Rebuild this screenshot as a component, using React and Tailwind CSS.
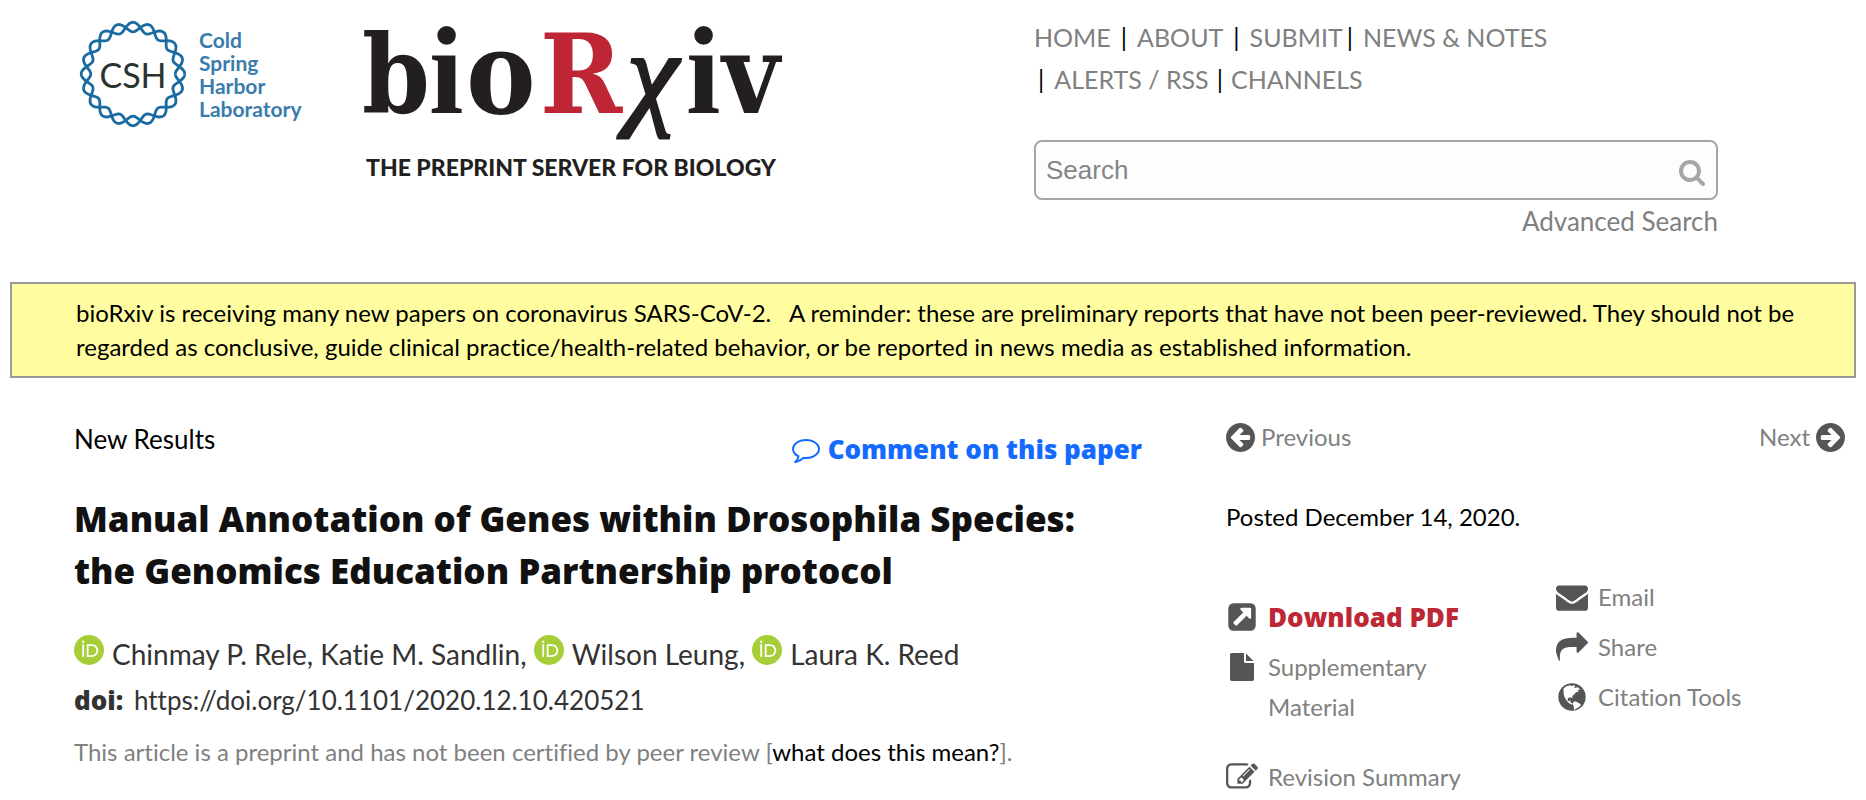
import clsx from 'clsx'

const icons = {
  search: 'M1216 832q0-185-131.5-316.5t-316.5-131.5-316.5 131.5-131.5 316.5 131.5 316.5 316.5 131.5 316.5-131.5 131.5-316.5zm512 832q0 52-38 90t-90 38q-54 0-90-38l-343-342q-179 124-399 124-143 0-273.5-55.5t-225-150-150-225-55.5-273.5 55.5-273.5 150-225 225-150 273.5-55.5 273.5 55.5 225 150 150 225 55.5 273.5q0 220-124 399l343 343q37 37 37 90z',
  arrow: 'M1408 960v-128q0-26-19-45t-45-19h-502l189-189q19-19 19-45t-19-45l-91-91q-18-18-45-18t-45 18l-362 362-91 91q-18 18-18 45t18 45l91 91 362 362q18 18 45 18t45-18l91-91q18-18 18-45t-18-45l-189-189h502q26 0 45-19t19-45zm256-64q0 209-103 385.5t-279.5 279.5-385.5 103-385.5-103-279.5-279.5-103-385.5 103-385.5 279.5-279.5 385.5-103 385.5 103 279.5 279.5 103 385.5z',
  edit: 'M888 1184l116-116-152-152-116 116v56h96v96h56zm440-720q-16-16-33 1l-350 350q-17 17-1 33t33-1l350-350q17-17 1-33zm80 594v190q0 119-84.5 203.5t-203.5 84.5h-832q-119 0-203.5-84.5t-84.5-203.5v-832q0-119 84.5-203.5t203.5-84.5h832q63 0 117 25 15 7 18 23 3 17-9 29l-49 49q-14 14-32 8-23-6-45-6h-832q-66 0-113 47t-47 113v832q0 66 47 113t113 47h832q66 0 113-47t47-113v-126q0-13 9-22l64-64q15-15 35-7t20 29zm-96-738l288 288-672 672h-288v-288zm444 132l-92 92-288-288 92-92q28-28 68-28t68 28l152 152q28 28 28 68t-28 68z',
  share: 'M1792 640q0 26-19 45l-512 512q-19 19-45 19t-45-19-19-45v-256h-224q-98 0-175.5 6t-154 21.5-133 42.5-105.5 69.5-80 101-48.5 138.5-17.5 181q0 55 5 123 0 6 2.5 23.5t2.5 26.5q0 15-8.5 25t-23.5 10q-16 0-28-17-7-9-13-22t-13.5-30-10.5-24q-127-285-127-451 0-199 53-333 162-403 875-403h224v-256q0-26 19-45t45-19 45 19l512 512q19 19 19 45z',
  envelope: 'M1792 710v794q0 66-47 113t-113 47h-1472q-66 0-113-47t-47-113v-794q44 49 101 87 362 246 497 345 57 42 92.5 65.5t94.5 48 110 24.5h2q51 0 110-24.5t94.5-48 92.5-65.5q170-123 498-345 57-39 100-87zm0-294q0 79-49 151t-122 123q-376 261-468 325-10 7-42.5 31t-54 38.5-52 32.5-57.5 27-50 9h-2q-23 0-50-9t-57.5-27-52-32.5-54-38.5-42.5-31q-91-64-262-182.5t-205-142.5q-62-42-117-115.5t-55-136.5q0-78 41.5-130t118.5-52h1472q65 0 112.5 47t47.5 113z',
  file: 'M1152 512v-472q22 14 36 28l408 408q14 14 28 36h-472zm-128 32q0 40 28 68t68 28h544v1056q0 40-28 68t-68 28h-1344q-40 0-68-28t-28-68v-1600q0-40 28-68t68-28h800v544z',
  external: 'M1408 928v-480q0-26-19-45t-45-19h-480q-42 0-59 39-17 41 14 70l144 144-534 534q-19 19-19 45t19 45l102 102q19 19 45 19t45-19l534-534 144 144q18 19 45 19 12 0 25-5 39-17 39-59zm256-512v960q0 119-84.5 203.5t-203.5 84.5h-960q-119 0-203.5-84.5t-84.5-203.5v-960q0-119 84.5-203.5t203.5-84.5h960q119 0 203.5 84.5t84.5 203.5z',
  comment: 'M896 384q-204 0-381.5 69.5t-282 187.5-104.5 255q0 112 71.5 213.5t201.5 175.5l87 50-27 96q-24 91-70 172 152-63 275-171l43-38 57 6q69 8 130 8 204 0 381.5-69.5t282-187.5 104.5-255-104.5-255-282-187.5-381.5-69.5zm896 512q0 174-120 321.5t-326 233-450 85.5q-70 0-145-8-198 175-460 242-49 14-114 22h-5q-15 0-27-10.5t-16-27.5v-1q-3-4-.5-12t2-10 4.5-9.5l6-9 7-8.5 8-9q7-8 31-34.5t34.5-38 31-39.5 32.5-51 27-59 26-76q-157-89-247.5-220t-90.5-281q0-130 71-248.5t191-204.5 286-136.5 348-50.5 348 50.5 286 136.5 191 204.5 71 248.5z',
}

function Icon({ name, className, box = '0 0 1792 1792' }) {
  return (
    <svg viewBox={box} fill="currentColor" aria-hidden="true" className={clsx('shrink-0', className)}>
      <path d={icons[name]} />
    </svg>
  )
}

function Globe({ className }) {
  return (
    <svg viewBox="0 0 32 32" aria-hidden="true" className={clsx('shrink-0', className)}>
      <circle cx="16" cy="16" r="13.7" fill="currentColor" />
      <path fill="#fff" d="M7.500 7.500l3-2.200 3.500-1 2 .6 2-.6 1.500.8-1.500 1.200 1.800.8 1.500-1.200 3 2.600-2.800.6 1.200 1.700-2.700.4-1.800 2.300-2 1.600.2 2.500-1.800-1.300-2.600.6-.5 2.400 1.300 1 1.700-1-.2 2 2 1.200-.4 1.300-2.400-1.300-2.600-2.400-2.200-3.600-1-3.500zM16.800 21.500l2.200-1.200 3 1.300 3 1.800-1.500 2.300-3 1.900-2.500 1.300-.3-3.600-1.100-2z" />
    </svg>
  )
}

// doua unde sinusoidale decalate, infasurate in jurul unui cerc
function strand(sign) {
  const points = []
  for (let i = 0; i <= 360; i += 2) {
    const a = (i * Math.PI) / 180
    const r = 47 + sign * 4.8 * Math.cos(a * 10)
    points.push(`${(54 + r * Math.cos(a)).toFixed(2)},${(54 + r * Math.sin(a)).toFixed(2)}`)
  }
  return points.join(' ')
}

function CshLogo() {
  return (
    <a href="#csh" aria-label="Cold Spring Harbor Laboratory" className="flex w-[225px] shrink-0 items-start gap-3 pt-5">
      <svg viewBox="0 0 108 108" className="size-[108px] shrink-0">
        <polyline points={strand(1)} fill="none" stroke="#1b6ba3" strokeWidth="2.8" />
        <polyline points={strand(-1)} fill="none" stroke="#1b6ba3" strokeWidth="2.8" />
        <text x="54" y="68" textAnchor="middle" fontSize="34" fill="#2a3330" className="font-['Lato']">CSH</text>
      </svg>
      <span className="flex flex-col pt-2 text-[21px] leading-[23px] font-bold text-[#3a7cab]">
        <span>Cold</span>
        <span>Spring</span>
        <span>Harbor</span>
        <span>Laboratory</span>
      </span>
    </a>
  )
}

function BiorxivLogo() {
  return (
    <a href="#home" aria-label="bioRxiv" className="shrink-0">
      <svg viewBox="360 0 430 190" className="h-[190px] w-[430px]" fill="#231f20">
        <g className="font-['DejaVu_Serif_Condensed','DejaVu_Serif'] font-bold">
          <text x="362" y="113" fontSize="108">b</text>
          <text x="466" y="113" fontSize="116">o</text>
          <text x="540" y="113" fontSize="110" fill="#be2535">R</text>
          <text x="722" y="113" fontSize="110">v</text>
        </g>
        <g className="font-['Liberation_Serif'] font-bold" fontSize="124">
          <text x="429" y="113">i</text>
          <text x="686" y="113">i</text>
        </g>
        <text x="627" y="113" fontSize="116" className="font-['Liberation_Serif'] italic" stroke="#231f20" strokeWidth="3">χ</text>
        <text x="366" y="176" fontSize="23" className="font-['Lato'] font-black">THE PREPRINT SERVER FOR BIOLOGY</text>
      </svg>
    </a>
  )
}

function Orcid() {
  return (
    <svg viewBox="0 0 256 256" aria-hidden="true" className="mr-2 inline size-[30px] align-baseline">
      <circle cx="128" cy="128" r="128" fill="#a6ce39" />
      <path fill="#fff" d="M71 79h15v107H71zM109 79h41c39 0 57 28 57 54 0 28-22 54-57 54h-41zm15 14v80h24c35 0 43-26 43-40 0-22-14-40-44-40z" />
      <circle cx="78.500" cy="57" r="10" fill="#fff" />
    </svg>
  )
}

function Bar({ className = 'mx-[10px]' }) {
  return <span className={clsx('text-black', className)}>|</span>
}

function Header() {
  return (
    <header className="flex items-start pl-[79px]">
      <div className="flex w-[955px] shrink-0 items-start gap-14">
        <CshLogo />
        <BiorxivLogo />
      </div>
      <div className="w-[684px] pt-4">
        <nav className="text-[25px] leading-[42px] text-[#808080]">
          <a href="#home">HOME</a><Bar />
          <a href="#about">ABOUT</a><Bar />
          <a href="#submit">SUBMIT</a><Bar className="mr-[10px] ml-1" />
          <a href="#news">NEWS &amp; NOTES</a>
          <br />
          <Bar className="mr-[10px] ml-1" /><a href="#alerts">ALERTS / RSS</a><Bar className="mx-2" />
          <a href="#channels">CHANNELS</a>
        </nav>
        <form role="search" className="mt-10 flex h-15 items-center rounded-lg border-2 border-[#a6a6a6] bg-[#fdfdfd] px-[10px]">
          <input
            type="search"
            aria-label="Search"
            placeholder="Search"
            className="min-w-0 flex-1 bg-transparent font-['Liberation_Sans'] text-[26px] outline-none placeholder:text-[#858585]"
          />
          <button type="button" aria-label="Submit search" className="pt-1 text-[#a6a6a6]">
            <Icon name="search" className="size-7" />
          </button>
        </form>
        <p className="text-right text-[26px] leading-[42px] text-[#808080]">
          <a href="#advanced">Advanced Search</a>
        </p>
      </div>
    </header>
  )
}

function Article() {
  return (
    <article className="w-[1074px] shrink-0 pt-1 text-[#333]">
      <div className="flex items-start justify-between pr-[6px]">
        <p className="text-[26px] leading-9 text-black">New Results</p>
        <a href="#comments" className="mt-[10px] flex items-center gap-2 font-['Open_Sans'] text-[26px] leading-9 font-extrabold text-[#146aff]">
          <Icon name="comment" className="size-7" />
          Comment on this paper
        </a>
      </div>
      <h1 className="mt-[26px] font-['Open_Sans'] text-[35px] leading-[52px] font-extrabold text-[#111]">
        Manual Annotation of Genes within Drosophila Species:
        <br />
        the Genomics Education Partnership protocol
      </h1>
      <p className="mt-[34px] text-[28px] leading-[46px]">
        <Orcid />Chinmay P. Rele, Katie M. Sandlin, <Orcid />Wilson Leung, <Orcid />Laura K. Reed
      </p>
      <p className="text-[26px] leading-[46px]">
        <strong className="mr-1 font-['Open_Sans'] font-extrabold">doi:</strong> https://doi.org/10.1101/2020.12.10.420521
      </p>
      <p className="mt-2 text-[24px] leading-[42px] text-[#808080]">
        This article is a preprint and has not been certified by peer review [
        <a href="#preprint" className="text-black">what does this mean?</a>].
      </p>
    </article>
  )
}

function Tool({ icon, href, children, className }) {
  return (
    <a href={href} className={clsx('flex items-start gap-[10px]', className)}>
      <span className="flex h-10 w-8 items-center justify-center text-[#555]">{icon}</span>
      <span className="flex-1">{children}</span>
    </a>
  )
}

function Sidebar() {
  return (
    <aside className="min-w-0 flex-1 pr-[21px] text-[24px] leading-10 text-[#808080]">
      <nav className="flex justify-between">
        <a href="#previous" className="flex items-center gap-[6px]">
          <Icon name="arrow" box="128 128 1536 1536" className="size-[29px] text-[#555]" />
          Previous
        </a>
        <a href="#next" className="flex items-center gap-[6px]">
          Next
          <Icon name="arrow" box="128 128 1536 1536" className="size-[29px] rotate-180 text-[#555]" />
        </a>
      </nav>
      <p className="mt-10 text-black">Posted December 14, 2020.</p>
      <div className="mt-10 flex">
        <div className="w-[330px] pt-5">
          <Tool href="#pdf" icon={<Icon name="external" className="size-8" />} className="font-['Open_Sans'] text-[26px] font-extrabold text-[#bd2736]">
            Download PDF
          </Tool>
          <Tool href="#supplementary" icon={<Icon name="file" className="size-7" />} className="mt-[10px] w-[240px]">
            Supplementary Material
          </Tool>
          <Tool href="#revision" icon={<Icon name="edit" className="size-8" />} className="mt-[30px]">
            Revision Summary
          </Tool>
        </div>
        <div className="flex flex-col gap-[10px]">
          <Tool href="#email" icon={<Icon name="envelope" className="size-8" />}>Email</Tool>
          <Tool href="#share" icon={<Icon name="share" className="size-8" />}>Share</Tool>
          <Tool href="#citation" icon={<Globe className="size-8" />}>Citation Tools</Tool>
        </div>
      </div>
    </aside>
  )
}

export default function App() {
  return (
    <div className="min-h-screen bg-white font-['Lato',sans-serif] [font-variant-ligatures:none]">
      <Header />
      <div className="mx-[10px] mt-10 border-2 border-[#999] bg-[#fffd9f] py-3 pr-8 pl-16 text-[24px] leading-[34px] text-black">
        bioRxiv is receiving many new papers on coronavirus SARS-CoV-2. &nbsp; A reminder: these are preliminary reports that have not been peer-reviewed. They should not be regarded as conclusive, guide clinical practice/health-related behavior, or be reported in news media as established information.
      </div>
      <main className="flex gap-[78px] pt-[39px] pl-[74px]">
        <Article />
        <Sidebar />
      </main>
    </div>
  )
}
